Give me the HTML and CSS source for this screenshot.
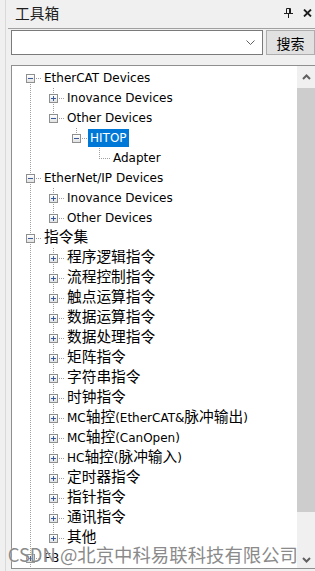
FILE: index.html
```html
<!DOCTYPE html>
<html lang="zh">
<head>
<meta charset="utf-8">
<title>工具箱</title>
<link rel="stylesheet" href="styles.css">
</head>
<body>
<div class="pane">
  <div class="header">
    <span class="title">工具箱</span>
    <span class="tools">
      <svg class="pin" width="9" height="10" viewBox="0 0 9 10"><path d="M2.5 0.5h4v5h-4z" fill="none" stroke="#1e1e1e"/><path d="M5.5 1v4" stroke="#1e1e1e"/><path d="M0 5.5h9M4.5 6v4" stroke="#1e1e1e"/></svg>
      <svg class="close" width="9" height="8" viewBox="0 0 9 8"><path d="M1 0.5l7 7M8 0.5l-7 7" stroke="#1e1e1e" stroke-width="1.8"/></svg>
    </span>
  </div>
  <div class="search">
    <div class="combo">
      <svg class="chev" width="9" height="5" viewBox="0 0 9 5"><path d="M0.5 0.5l4 4 4-4" fill="none" stroke="#606060"/></svg>
    </div>
    <button class="btn">搜索</button>
  </div>
  <div class="tree">
    <div class="rows">
      <div class="row"><span class="n first"><i class="box"></i></span><span class="t">EtherCAT Devices</span></div>
      <div class="row"><span class="g v"></span><span class="n mid"><i class="box plus"></i></span><span class="t">Inovance Devices</span></div>
      <div class="row"><span class="g v"></span><span class="n last"><i class="box"></i></span><span class="t">Other Devices</span></div>
      <div class="row"><span class="g v"></span><span class="g"></span><span class="n last"><i class="box"></i></span><span class="t sel">HITOP</span></div>
      <div class="row"><span class="g v"></span><span class="g"></span><span class="g"></span><span class="n last"></span><span class="t">Adapter</span></div>
      <div class="row"><span class="n mid"><i class="box"></i></span><span class="t">EtherNet/IP Devices</span></div>
      <div class="row"><span class="g v"></span><span class="n mid"><i class="box plus"></i></span><span class="t">Inovance Devices</span></div>
      <div class="row"><span class="g v"></span><span class="n last"><i class="box plus"></i></span><span class="t">Other Devices</span></div>
      <div class="row"><span class="n mid"><i class="box"></i></span><span class="t"><span class="zh">指令集</span></span></div>
      <div class="row"><span class="g v"></span><span class="n mid"><i class="box plus"></i></span><span class="t"><span class="zh">程序逻辑指令</span></span></div>
      <div class="row"><span class="g v"></span><span class="n mid"><i class="box plus"></i></span><span class="t"><span class="zh">流程控制指令</span></span></div>
      <div class="row"><span class="g v"></span><span class="n mid"><i class="box plus"></i></span><span class="t"><span class="zh">触点运算指令</span></span></div>
      <div class="row"><span class="g v"></span><span class="n mid"><i class="box plus"></i></span><span class="t"><span class="zh">数据运算指令</span></span></div>
      <div class="row"><span class="g v"></span><span class="n mid"><i class="box plus"></i></span><span class="t"><span class="zh">数据处理指令</span></span></div>
      <div class="row"><span class="g v"></span><span class="n mid"><i class="box plus"></i></span><span class="t"><span class="zh">矩阵指令</span></span></div>
      <div class="row"><span class="g v"></span><span class="n mid"><i class="box plus"></i></span><span class="t"><span class="zh">字符串指令</span></span></div>
      <div class="row"><span class="g v"></span><span class="n mid"><i class="box plus"></i></span><span class="t"><span class="zh">时钟指令</span></span></div>
      <div class="row"><span class="g v"></span><span class="n mid"><i class="box plus"></i></span><span class="t">MC<span class="zh">轴控</span>(EtherCAT&amp;<span class="zh">脉冲输出</span>)</span></div>
      <div class="row"><span class="g v"></span><span class="n mid"><i class="box plus"></i></span><span class="t">MC<span class="zh">轴控</span>(CanOpen)</span></div>
      <div class="row"><span class="g v"></span><span class="n mid"><i class="box plus"></i></span><span class="t">HC<span class="zh">轴控</span>(<span class="zh">脉冲输入</span>)</span></div>
      <div class="row"><span class="g v"></span><span class="n mid"><i class="box plus"></i></span><span class="t"><span class="zh">定时器指令</span></span></div>
      <div class="row"><span class="g v"></span><span class="n mid"><i class="box plus"></i></span><span class="t"><span class="zh">指针指令</span></span></div>
      <div class="row"><span class="g v"></span><span class="n mid"><i class="box plus"></i></span><span class="t"><span class="zh">通讯指令</span></span></div>
      <div class="row"><span class="g v"></span><span class="n last"><i class="box plus"></i></span><span class="t"><span class="zh">其他</span></span></div>
      <div class="row"><span class="n mid"><i class="box plus"></i></span><span class="t">FB</span></div>
    </div>
    <div class="vs">
      <div class="arrow up"><svg width="9" height="6" viewBox="0 0 9 6"><path d="M1 5l3.5-3.5L8 5" fill="none" stroke="#606060" stroke-width="2"/></svg></div>
      <div class="thumb"></div>
      <div class="track"></div>
      <div class="arrow down"><svg width="9" height="6" viewBox="0 0 9 6"><path d="M1 1l3.5 3.5L8 1" fill="none" stroke="#606060" stroke-width="2"/></svg></div>
    </div>
  </div>
  <div class="wm">CSDN @北京中科易联科技有限公司</div>
</div>
</body>
</html>
```
FILE: styles.css
```css
* { box-sizing: border-box; margin: 0; padding: 0; }
html, body { width: 315px; height: 571px; overflow: hidden; }
body {
  background: #f0f0f0;
  font-family: "DejaVu Sans", "Noto Sans CJK SC", sans-serif;
  font-size: 12px;
  color: #000;
}
.pane {
  position: relative;
  height: 571px;
  margin-left: 5px;
  border-left: 1px solid #d9d9d9;
  padding-left: 5px;
}
.header {
  margin-left: -3px;
  height: 29px;
  border-bottom: 1px solid #a0a0a0;
  display: flex;
  align-items: center;
  justify-content: space-between;
  padding: 0 3px 2px 7px;
}
.title {
  font-family: "Noto Sans CJK SC", sans-serif;
  font-size: 14.7px;
  line-height: 18px;
  color: #1e1e1e;
}
.tools { display: flex; align-items: center; gap: 10px; }
.pin, .close { display: block; }
.search {
  margin-top: 1px;
  display: flex;
  gap: 3px;
}
.combo {
  width: 253px;
  height: 25px;
  border: 1px solid #7a7a7a;
  background: #fff;
  display: flex;
  align-items: center;
  justify-content: flex-end;
  padding-right: 7px;
}
.chev { display: block; }
.btn {
  width: 49px;
  height: 25px;
  background: #e1e1e1;
  border: 1px solid #adadad;
  font-family: "Noto Sans CJK SC", sans-serif;
  font-size: 14px;
  color: #000;
  text-align: center;
  line-height: 22px;
}
.tree {
  margin-top: 10px;
  width: 305px;
  height: 504px;
  border: 1px solid #8f8f8f;
  background: #fff;
  display: flex;
}
.rows {
  flex: 1;
  padding-top: 2px;
  overflow: hidden;
}
.row {
  display: flex;
  align-items: center;
  height: 20px;
  padding-left: 7px;
  white-space: nowrap;
}
.g, .n {
  flex: none;
  position: relative;
  width: 23px;
  height: 20px;
}
.g.v::before, .n::before {
  content: "";
  position: absolute;
  left: 11px;
  width: 1px;
  background: linear-gradient(to bottom, #a0a0a0 50%, transparent 50%);
  background-size: 1px 2px;
}
.g.v::before { top: 0; height: 20px; }
.n.first::before { top: 10px; height: 10px; }
.n.mid::before { top: 0; height: 20px; }
.n.last::before { top: 0; height: 11px; }
.n::after {
  content: "";
  position: absolute;
  left: 12px;
  top: 10px;
  width: 10px;
  height: 1px;
  background: linear-gradient(to right, transparent 50%, #a0a0a0 50%);
  background-size: 2px 1px;
}
.box {
  position: absolute;
  z-index: 1;
  left: 7px;
  top: 6px;
  width: 9px;
  height: 9px;
  border: 1px solid #8e8f8f;
  background: linear-gradient(#ffffff, #e2e2e2);
}
.box::before {
  content: "";
  position: absolute;
  left: 1px;
  top: 3px;
  width: 5px;
  height: 1px;
  background: #3a5a9a;
}
.box.plus::after {
  content: "";
  position: absolute;
  left: 3px;
  top: 1px;
  width: 1px;
  height: 5px;
  background: #3a5a9a;
}
.t {
  height: 18px;
  line-height: 18px;
  padding: 0 2px;
}
.t.sel { background: #0078d7; color: #fff; }
.zh {
  font-family: "Noto Sans CJK SC", sans-serif;
  font-size: 14.7px;
  line-height: 1;
}
.vs {
  width: 18px;
  flex: none;
  display: flex;
  flex-direction: column;
  background: #f0f0f0;
}
.arrow {
  display: flex;
  align-items: center;
  justify-content: center;
}
.arrow svg { display: block; }
.up { height: 22px; }
.thumb { height: 424px; background: #cdcdcd; }
.track { flex: 1; }
.down { height: 17px; }
.wm {
  position: absolute;
  right: 17px;
  top: 543px;
  font-family: "Noto Sans CJK SC", sans-serif;
  font-size: 18.4px;
  line-height: 22px;
  color: #8a8a8a;
  white-space: nowrap;
  text-shadow: 0 0 1px #fff;
  z-index: 2;
}
```
